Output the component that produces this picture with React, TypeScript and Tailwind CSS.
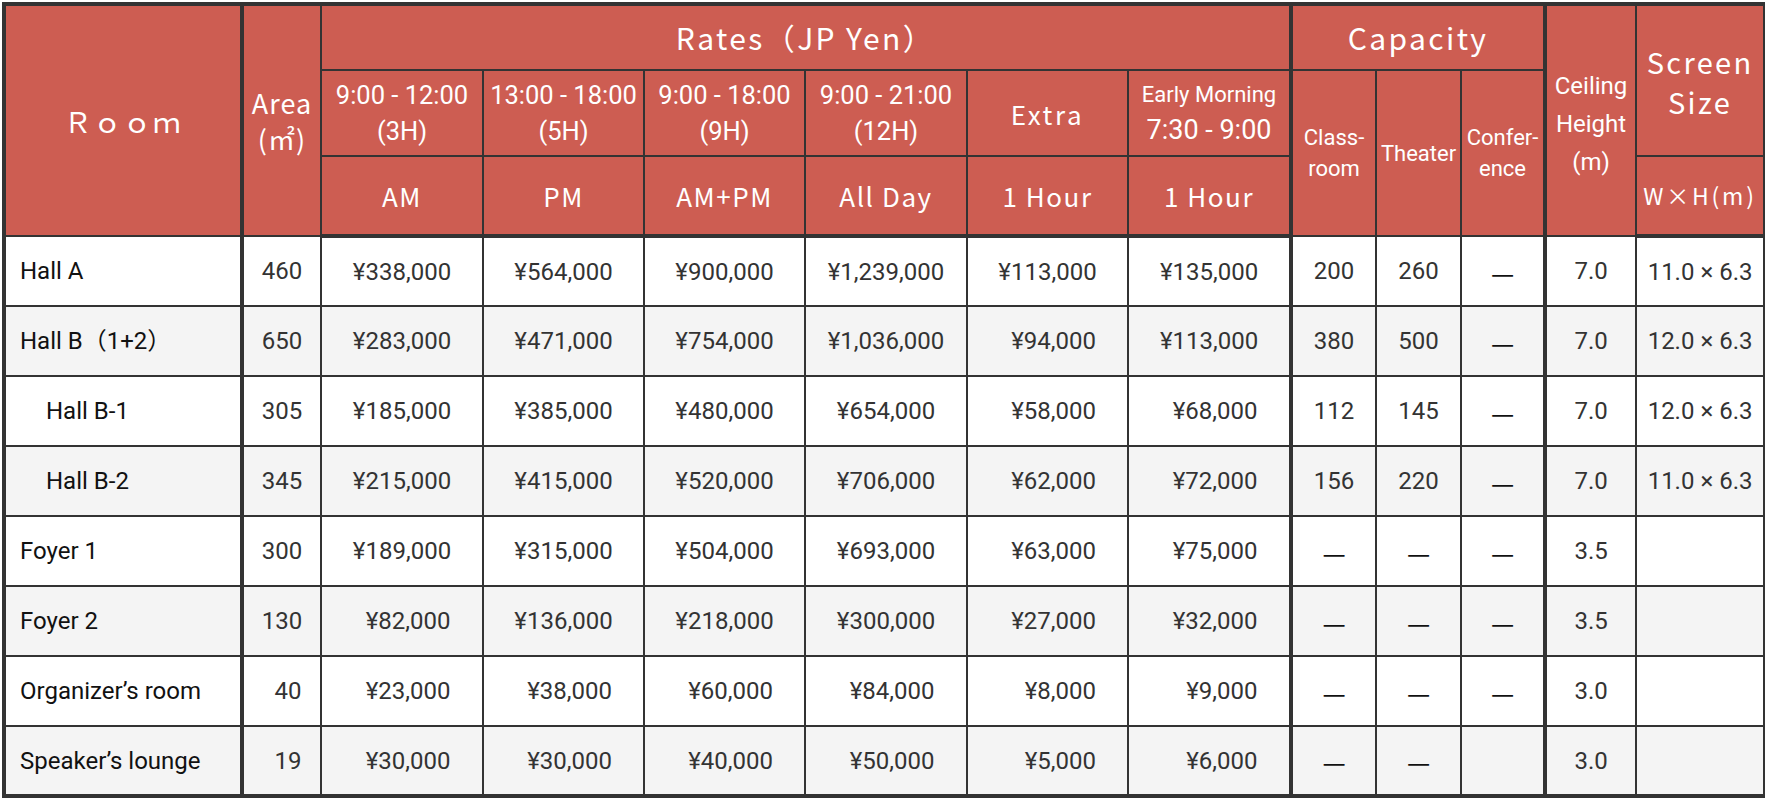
const roboto = "font-['Roboto','Noto_Sans_CJK_JP',sans-serif]";
const cjk = "font-['Noto_Sans_CJK_JP',sans-serif]";

type Row = {
  name: string;
  indent?: boolean;
  area: string;
  prices: string[];
  cap: string[];
  ceiling: string;
  screen: string;
};

const rows: Row[] = [
  { name: "Hall A", area: "460", prices: ["¥338,000", "¥564,000", "¥900,000", "¥1,239,000", "¥113,000", "¥135,000"], cap: ["200", "260", "—"], ceiling: "7.0", screen: "11.0 × 6.3" },
  { name: "Hall B（1+2）", area: "650", prices: ["¥283,000", "¥471,000", "¥754,000", "¥1,036,000", "¥94,000", "¥113,000"], cap: ["380", "500", "—"], ceiling: "7.0", screen: "12.0 × 6.3" },
  { name: "Hall B-1", indent: true, area: "305", prices: ["¥185,000", "¥385,000", "¥480,000", "¥654,000", "¥58,000", "¥68,000"], cap: ["112", "145", "—"], ceiling: "7.0", screen: "12.0 × 6.3" },
  { name: "Hall B-2", indent: true, area: "345", prices: ["¥215,000", "¥415,000", "¥520,000", "¥706,000", "¥62,000", "¥72,000"], cap: ["156", "220", "—"], ceiling: "7.0", screen: "11.0 × 6.3" },
  { name: "Foyer 1", area: "300", prices: ["¥189,000", "¥315,000", "¥504,000", "¥693,000", "¥63,000", "¥75,000"], cap: ["—", "—", "—"], ceiling: "3.5", screen: "" },
  { name: "Foyer 2", area: "130", prices: ["¥82,000", "¥136,000", "¥218,000", "¥300,000", "¥27,000", "¥32,000"], cap: ["—", "—", "—"], ceiling: "3.5", screen: "" },
  { name: "Organizer’s room", area: "40", prices: ["¥23,000", "¥38,000", "¥60,000", "¥84,000", "¥8,000", "¥9,000"], cap: ["—", "—", "—"], ceiling: "3.0", screen: "" },
  { name: "Speaker’s lounge", area: "19", prices: ["¥30,000", "¥30,000", "¥40,000", "¥50,000", "¥5,000", "¥6,000"], cap: ["—", "—", ""], ceiling: "3.0", screen: "" },
];

const times = [
  ["9:00 - 12:00", "(3H)"],
  ["13:00 - 18:00", "(5H)"],
  ["9:00 - 18:00", "(9H)"],
  ["9:00 - 21:00", "(12H)"],
];

const plans = ["AM", "PM", "AM+PM", "All Day", "1 Hour", "1 Hour"];

const th = "p-0 border-2 border-[#333] bg-[#cd5d52] text-white font-normal text-center align-middle";
const td = "p-0 border-2 border-[#333] text-center align-middle";

export default function App() {
  return (
    <div className="w-[1765px] h-[799px] bg-white overflow-hidden p-[2px]">
      <table className="w-[1761px] table-fixed border-collapse border-4 border-[#333]">
        <colgroup>
          <col className="w-[238px]" />
          <col className="w-[79px]" />
          <col className="w-[162px]" />
          <col className="w-[161px]" />
          <col className="w-[161px]" />
          <col className="w-[162px]" />
          <col className="w-[161px]" />
          <col className="w-[163px]" />
          <col className="w-[85px]" />
          <col className="w-[85px]" />
          <col className="w-[84px]" />
          <col className="w-[91px]" />
          <col className="w-[129px]" />
        </colgroup>
        <thead>
          <tr className="h-[66px]">
            <th rowSpan={3} className={`${th} border-r-4 ${cjk} font-medium text-[28px] tracking-[0.06em]`}>
              Ｒｏｏｍ
            </th>
            <th rowSpan={3} className={`${th} ${cjk} font-medium text-[27px] leading-[36px] tracking-[0.04em]`}>
              Area
              <br />
              (㎡)
            </th>
            <th colSpan={6} className={`${th} ${cjk} font-medium text-[30px] tracking-[0.08em]`}>
              Rates（JP Yen）
            </th>
            <th colSpan={3} className={`${th} border-l-4 ${cjk} font-medium text-[30px] tracking-[0.08em]`}>
              Capacity
            </th>
            <th rowSpan={3} className={`${th} border-l-4 ${roboto} text-[24px] leading-[38px] pt-[6px]`}>
              Ceiling
              <br />
              Height
              <br />
              (m)
            </th>
            <th rowSpan={2} className={`${th} ${cjk} font-medium text-[29px] leading-[40px] tracking-[0.08em]`}>
              Screen
              <br />
              Size
            </th>
          </tr>
          <tr className="h-[86px]">
            {times.map(([a, b]) => (
              <th key={a} className={`${th} ${roboto} text-[25.5px] leading-[36px]`}>
                {a}
                <br />
                {b}
              </th>
            ))}
            <th className={`${th} ${cjk} font-medium text-[26px] tracking-[0.1em]`}>Extra</th>
            <th className={`${th} ${roboto}`}>
              <div className="text-[22px] leading-[34px]">Early Morning</div>
              <div className="text-[27px] leading-[36px]">7:30 - 9:00</div>
            </th>
            <th rowSpan={2} className={`${th} border-l-4 ${roboto} text-[22px] leading-[31px]`}>
              Class-
              <br />
              room
            </th>
            <th rowSpan={2} className={`${th} ${roboto} text-[22px]`}>
              Theater
            </th>
            <th rowSpan={2} className={`${th} ${roboto} text-[22px] leading-[31px]`}>
              Confer-
              <br />
              ence
            </th>
          </tr>
          <tr className="h-[80px]">
            {plans.map((p, i) => (
              <th key={i} className={`${th} border-b-4 ${cjk} font-medium text-[26px] tracking-[0.06em]`}>
                {p}
              </th>
            ))}
            <th className={`${th} border-b-4 ${cjk} font-medium text-[23px] tracking-[0.12em]`}>W×H(m)</th>
          </tr>
        </thead>
        <tbody className={`${roboto} text-[24px] text-[#333]`}>
          {rows.map((r, i) => (
            <tr key={r.name} className={`h-[70px] ${i % 2 === 1 ? "bg-[#f4f4f4]" : "bg-white"}`}>
              <td className={`p-0 border-2 border-r-4 border-[#333] text-left align-middle text-[#111] ${r.indent ? "pl-[40px]" : "pl-[14px]"}`}>
                {r.name}
              </td>
              <td className={td}>
                <span className="inline-block min-w-[39px] text-right">{r.area}</span>
              </td>
              {r.prices.map((p, j) => (
                <td key={j} className={td}>
                  <span className="inline-block min-w-[97px] text-right">{p}</span>
                </td>
              ))}
              {r.cap.map((c, j) => (
                <td key={j} className={`${td} ${j === 0 ? "border-l-4" : ""} ${c === "—" ? `${cjk} text-[26px] text-[#111]` : ""}`}>
                  {c}
                </td>
              ))}
              <td className={`${td} border-l-4`}>{r.ceiling}</td>
              <td className={td}>{r.screen}</td>
            </tr>
          ))}
        </tbody>
      </table>
    </div>
  );
}
